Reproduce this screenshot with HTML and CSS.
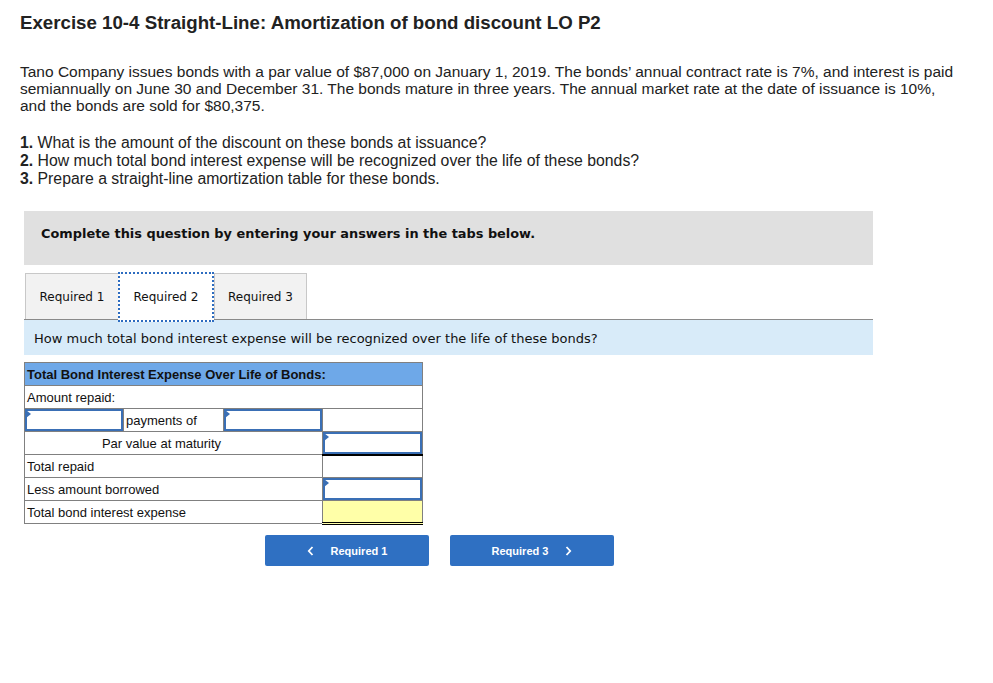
FILE: index.html
```html
<!DOCTYPE html>
<html>
<head>
<meta charset="utf-8">
<link rel="stylesheet" href="styles.css">
</head>
<body>
<div class="page">
  <h1 class="title">Exercise 10-4 Straight-Line: Amortization of bond discount LO P2</h1>
  <p class="intro">Tano Company issues bonds with a par value of $87,000 on January 1, 2019. The bonds’ annual contract rate is 7%, and interest is paid semiannually on June 30 and December 31. The bonds mature in three years. The annual market rate at the date of issuance is 10%, and the bonds are sold for $80,375.</p>
  <ol class="questions">
    <li><b>1.</b> What is the amount of the discount on these bonds at issuance?</li>
    <li><b>2.</b> How much total bond interest expense will be recognized over the life of these bonds?</li>
    <li><b>3.</b> Prepare a straight-line amortization table for these bonds.</li>
  </ol>
  <div class="work">
    <div class="complete">Complete this question by entering your answers in the tabs below.</div>
    <div class="tabs">
      <div class="tab">Required 1</div>
      <div class="tab active">Required 2</div>
      <div class="tab">Required 3</div>
    </div>
    <div class="prompt">How much total bond interest expense will be recognized over the life of these bonds?</div>
    <table class="grid">
      <tr><th colspan="4">Total Bond Interest Expense Over Life of Bonds:</th></tr>
      <tr><td colspan="4">Amount repaid:</td></tr>
      <tr>
        <td class="in"><span class="flag"></span></td>
        <td>payments of</td>
        <td class="in"><span class="flag"></span></td>
        <td></td>
      </tr>
      <tr><td colspan="3" class="center">Par value at maturity</td><td class="in under"><span class="flag"></span></td></tr>
      <tr><td colspan="3">Total repaid</td><td></td></tr>
      <tr><td colspan="3">Less amount borrowed</td><td class="in"><span class="flag"></span></td></tr>
      <tr><td colspan="3">Total bond interest expense</td><td class="total"></td></tr>
    </table>
    <div class="nav">
      <button class="btn"><svg class="chev" width="7" height="10" viewBox="0 0 7 10"><path d="M5.5 1 L1.8 5 L5.5 9" fill="none" stroke="#fff" stroke-width="1.8"/></svg>Required 1</button>
      <button class="btn">Required 3<svg class="chev right" width="7" height="10" viewBox="0 0 7 10"><path d="M1.5 1 L5.2 5 L1.5 9" fill="none" stroke="#fff" stroke-width="1.8"/></svg></button>
    </div>
  </div>
</div>
</body>
</html>
```
FILE: styles.css
```css
html, body {
  margin: 0;
  padding: 0;
  background: #fff;
}
.page {
  padding: 12px 0 0 20px;
  width: 940px;
  font-family: "Liberation Sans", Arial, sans-serif;
  color: #222;
}
.title {
  margin: 0;
  font-size: 18.7px;
  font-weight: bold;
  line-height: 22px;
  color: #222;
}
.intro {
  margin: 29px 0 0 0;
  font-size: 15.5px;
  line-height: 17px;
}
.questions {
  list-style: none;
  margin: 20px 0 0 0;
  padding: 0;
  font-size: 15.8px;
  line-height: 18px;
}
.work {
  margin: 23px 0 0 4px;
  width: 849px;
}
.complete {
  background: #e0e0e0;
  height: 54px;
  box-sizing: border-box;
  padding: 14px 17px;
  font-family: "DejaVu Sans", Verdana, sans-serif;
  font-weight: bold;
  font-size: 12.9px;
  line-height: 17px;
  color: #111;
}
.tabs {
  display: flex;
  margin-top: 8px;
  padding-left: 1px;
  border-bottom: 1px solid #8a8a8a;
}
.tab {
  width: 93px;
  height: 46px;
  box-sizing: border-box;
  border: 1px solid #c8c8c8;
  border-bottom: none;
  border-right: none;
  background: #f2f2f2;
  font-family: "DejaVu Sans", Verdana, sans-serif;
  font-size: 12px;
  line-height: 47px;
  text-align: center;
  color: #111;
}
.tab:last-child {
  border-right: 1px solid #c8c8c8;
}
.tab.active {
  width: 96px;
  background: #fff;
  border: 2px dotted #2d6cc0;
  height: 50px;
  margin-top: -1px;
  margin-bottom: -3px;
  line-height: 47px;
  position: relative;
}
.prompt {
  background: #d8ebf9;
  height: 35px;
  box-sizing: border-box;
  padding: 11px 10px 0;
  font-family: "DejaVu Sans", Verdana, sans-serif;
  font-size: 13px;
  line-height: 16px;
  color: #111;
}
.grid {
  margin-top: 7px;
  border-collapse: collapse;
  width: 399px;
  font-family: "Liberation Sans", Arial, sans-serif;
  font-size: 13px;
  color: #111;
}
.grid th, .grid td {
  border: 1px solid #808080;
  height: 23px;
  padding: 0 2px;
  text-align: left;
  box-sizing: border-box;
}
.grid th {
  background: #6ea8e8;
  font-weight: bold;
}
.grid td:nth-child(1) { width: 99px; }
.grid td.center {
  text-align: center;
  padding-right: 26px;
}
.grid td.in {
  position: relative;
  box-shadow: inset 0 0 0 2px #3a6fb5;
}
.grid td.in.under {
  border-bottom: 2px solid #000;
}
.grid td.total {
  background: #ffffa8;
  border-bottom: 3px double #000;
}
.flag {
  position: absolute;
  left: 1px;
  top: 1px;
  width: 0;
  height: 0;
  border-left: 5px solid #3a6fb5;
  border-top: 4px solid transparent;
  border-bottom: 4px solid transparent;
}
.grid tr td:last-child { width: 100px; }
.grid tr:nth-child(3) td:nth-child(2) { width: 100px; }
.grid tr:nth-child(3) td:nth-child(3) { width: 99px; }
.nav {
  display: flex;
  gap: 21px;
  margin: 10px 0 0 241px;
}
.btn {
  width: 164px;
  height: 31px;
  border: none;
  border-radius: 2px;
  background: #2f70c2;
  color: #fff;
  font-family: "Liberation Sans", Arial, sans-serif;
  font-weight: bold;
  font-size: 11px;
  display: flex;
  align-items: center;
  justify-content: center;
  padding: 0;
}
.chev {
  margin-right: 17px;
}
.chev.right {
  margin-right: 0;
  margin-left: 17px;
}
```
